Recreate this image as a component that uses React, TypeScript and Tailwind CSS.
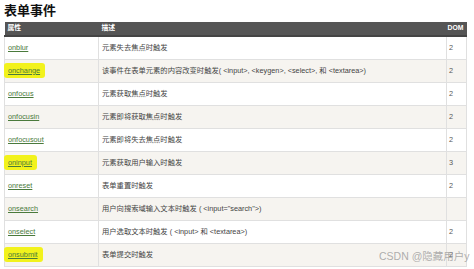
import React from "react";

const rows: { name: string; desc: string; dom: string; hl?: boolean }[] = [
  { name: "onblur", desc: "元素失去焦点时触发", dom: "2" },
  { name: "onchange", desc: "该事件在表单元素的内容改变时触发( <input>, <keygen>, <select>, 和 <textarea>)", dom: "2", hl: true },
  { name: "onfocus", desc: "元素获取焦点时触发", dom: "2" },
  { name: "onfocusin", desc: "元素即将获取焦点时触发", dom: "2" },
  { name: "onfocusout", desc: "元素即将失去焦点时触发", dom: "2" },
  { name: "oninput", desc: "元素获取用户输入时触发", dom: "3", hl: true },
  { name: "onreset", desc: "表单重置时触发", dom: "2" },
  { name: "onsearch", desc: "用户向搜索域输入文本时触发 ( <input=\"search\">)", dom: "" },
  { name: "onselect", desc: "用户选取文本时触发 ( <input> 和 <textarea>)", dom: "2" },
  { name: "onsubmit", desc: "表单提交时触发", dom: "2", hl: true },
];

export default function App() {
  return (
    <div
      className="relative w-[474px] h-[269px] overflow-hidden bg-white"
      style={{ fontFamily: '"Liberation Sans", "Noto Sans CJK SC", sans-serif' }}
    >
      <div className="pl-[4px] pt-[2px] h-[22px] text-[13px] leading-[18px] font-bold text-[#111]">
        表单事件
      </div>
      <table className="ml-[4px] w-[462px] border-collapse table-fixed text-[7.3px] leading-none">
        <colgroup>
          <col className="w-[94px]" />
          <col className="w-[348px]" />
          <col className="w-[20px]" />
        </colgroup>
        <thead>
          <tr className="h-[14px] bg-[#555555] text-white font-bold text-[6.8px]">
            <th className="text-left pl-[3px] border-b-2 border-[#444]">属性</th>
            <th className="text-left pl-[3px] border-b-2 border-[#444]">描述</th>
            <th className="text-left pl-[1px] border-b-2 border-[#444]">DOM</th>
          </tr>
        </thead>
        <tbody>
          {rows.map((r, i) => (
            <tr key={r.name} className={`h-[23px] ${i % 2 === 1 ? "bg-[#f6f4f0]" : "bg-white"}`}>
              <td className="pl-[3px] border border-[#e0e0e0]">
                <span className="relative inline-block">
                  {r.hl && (
                    <span className="absolute -left-[4px] -right-[5px] -top-[4px] -bottom-[4px] rounded-[3px] bg-[#f2f21c]" />
                  )}
                  <span className="relative text-[#4a7a3c] underline underline-offset-1">{r.name}</span>
                </span>
              </td>
              <td className="pl-[3px] border border-[#e0e0e0] text-[#444] whitespace-nowrap">{r.desc}</td>
              <td className="pl-[2px] border border-[#e0e0e0] text-[#555]">{r.dom}</td>
            </tr>
          ))}
        </tbody>
      </table>
      <div className="absolute left-[379px] top-[249px] text-[10.5px] leading-[14px] text-[#9a9a9a]/80 whitespace-nowrap">
        CSDN @隐藏用户y
      </div>
    </div>
  );
}
